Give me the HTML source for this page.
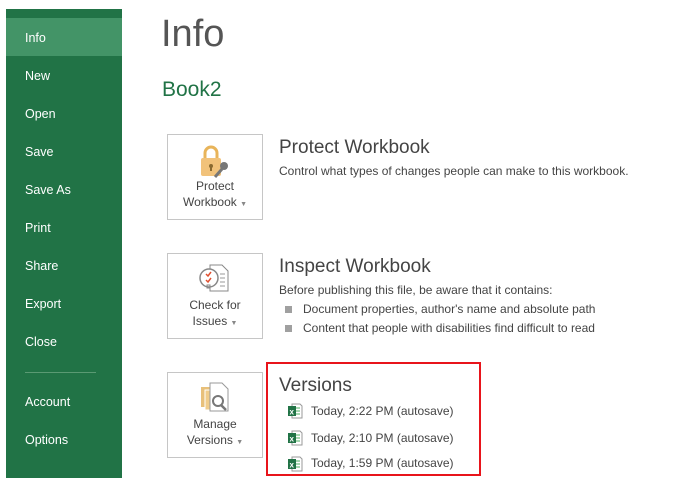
<!DOCTYPE html><html><head><style>
body{margin:0;width:685px;height:485px;background:#fff;font-family:"Liberation Sans",sans-serif;position:relative;overflow:hidden;color:#444}
.a{position:absolute;white-space:nowrap}
#side{position:absolute;left:6px;top:9px;width:116px;height:469px;background:#217346}
.n{position:absolute;left:19px;color:#fff;font-size:12.5px;line-height:16px}
.btn{position:absolute;left:167px;width:94px;height:84px;border:1px solid #c6c6c6;background:#fff;text-align:center;font-size:12px;color:#444;line-height:16px}
.btn svg{position:absolute;left:27px;top:8px}
.btn .t{position:absolute;left:0;right:0;bottom:6px}
.h{font-size:19px;color:#444}
.d{font-size:12px;color:#444}
.c{font-size:7px;color:#888}
</style></head><body>
<div id="side">
<div style="position:absolute;left:0;top:9px;width:116px;height:38px;background:#439467"></div>
<div class="n" style="top:21px">Info</div>
<div class="n" style="top:59px">New</div>
<div class="n" style="top:97px">Open</div>
<div class="n" style="top:135px">Save</div>
<div class="n" style="top:173px">Save As</div>
<div class="n" style="top:211px">Print</div>
<div class="n" style="top:249px">Share</div>
<div class="n" style="top:287px">Export</div>
<div class="n" style="top:325px">Close</div>
<div style="position:absolute;left:19px;top:363px;width:71px;height:1px;background:#5a9a73"></div>
<div class="n" style="top:385px">Account</div>
<div class="n" style="top:423px">Options</div>
</div>
<div class="a" style="left:161px;top:13px;font-size:38px;color:#555">Info</div>
<div class="a" style="left:162px;top:78px;font-size:21px;color:#217346">Book2</div>

<div class="btn" style="top:134px">
<svg width="40" height="36" viewBox="0 0 40 36"><path d="M10 16v-6a6 6 0 0 1 12 0v6" fill="none" stroke="#e8b45a" stroke-width="3"/><rect x="6" y="15" width="20" height="18" rx="2" fill="#f1c27a"/><circle cx="16" cy="23" r="2" fill="#8a6a30"/><rect x="15" y="23" width="2" height="5" fill="#8a6a30"/><circle cx="29" cy="23" r="4" fill="#777"/><path d="M27 26l-7 8" stroke="#777" stroke-width="3"/></svg>
<div class="t">Protect<br>Workbook <span class="c">▼</span></div></div>
<div class="a h" style="left:279px;top:137px">Protect Workbook</div>
<div class="a d" style="left:279px;top:164px">Control what types of changes people can make to this workbook.</div>

<div class="btn" style="top:253px">
<svg width="40" height="36" viewBox="0 0 40 36"><path d="M15 3h12l6 6v20H15z" fill="#fff" stroke="#888"/><path d="M25 12h5M25 16h5M25 20h5M25 24h5" stroke="#999"/><circle cx="14" cy="16" r="9" fill="#fff" stroke="#888" stroke-width="1.5"/><path d="M11 12l2 2 3-4M11 18l2 2 3-4" stroke="#e05030" fill="none" stroke-width="1.5"/><rect x="12" y="23" width="3" height="3" fill="none" stroke="#888"/></svg>
<div class="t">Check for<br>Issues <span class="c">▼</span></div></div>
<div class="a h" style="left:279px;top:256px">Inspect Workbook</div>
<div class="a d" style="left:279px;top:283px">Before publishing this file, be aware that it contains:</div>
<div class="a" style="left:285px;top:306px;width:7px;height:7px;background:#a0a0a0"></div>
<div class="a d" style="left:303px;top:302px">Document properties, author's name and absolute path</div>
<div class="a" style="left:285px;top:325px;width:7px;height:7px;background:#a0a0a0"></div>
<div class="a d" style="left:303px;top:321px">Content that people with disabilities find difficult to read</div>

<div class="btn" style="top:372px">
<svg width="40" height="36" viewBox="0 0 40 36"><rect x="6" y="6" width="14" height="20" fill="#e8c07a"/><rect x="10" y="9" width="14" height="20" fill="#f0cc8a" stroke="#fff"/><path d="M15 2h12l6 6v22H15z" fill="#fff" stroke="#999"/><circle cx="23" cy="20" r="5" fill="#fff" stroke="#777" stroke-width="2"/><path d="M26 24l5 5" stroke="#777" stroke-width="2.5"/></svg>
<div class="t">Manage<br>Versions <span class="c">▼</span></div></div>
<div class="a" style="left:266px;top:362px;width:211px;height:110px;border:2px solid #e8141b"></div>
<div class="a h" style="left:279px;top:375px">Versions</div>
<svg class="a" style="left:287px;top:403px" width="16" height="16"><path d="M5 1h8l2 2v12H5z" fill="#fff" stroke="#9a9a9a"/><path d="M9 5h4M9 8h4M9 11h4" stroke="#4caf60"/><rect x="1" y="3" width="8" height="10" fill="#217346"/><text x="2.5" y="11.5" fill="#fff" font-size="8" font-family="Liberation Sans" font-weight="bold">x</text></svg>
<div class="a d" style="left:311px;top:404px">Today, 2:22 PM (autosave)</div>
<svg class="a" style="left:287px;top:430px" width="16" height="16"><path d="M5 1h8l2 2v12H5z" fill="#fff" stroke="#9a9a9a"/><path d="M9 5h4M9 8h4M9 11h4" stroke="#4caf60"/><rect x="1" y="3" width="8" height="10" fill="#217346"/><text x="2.5" y="11.5" fill="#fff" font-size="8" font-family="Liberation Sans" font-weight="bold">x</text></svg>
<div class="a d" style="left:311px;top:431px">Today, 2:10 PM (autosave)</div>
<svg class="a" style="left:287px;top:456px" width="16" height="16"><path d="M5 1h8l2 2v12H5z" fill="#fff" stroke="#9a9a9a"/><path d="M9 5h4M9 8h4M9 11h4" stroke="#4caf60"/><rect x="1" y="3" width="8" height="10" fill="#217346"/><text x="2.5" y="11.5" fill="#fff" font-size="8" font-family="Liberation Sans" font-weight="bold">x</text></svg>
<div class="a d" style="left:311px;top:456px">Today, 1:59 PM (autosave)</div>
</body></html>
